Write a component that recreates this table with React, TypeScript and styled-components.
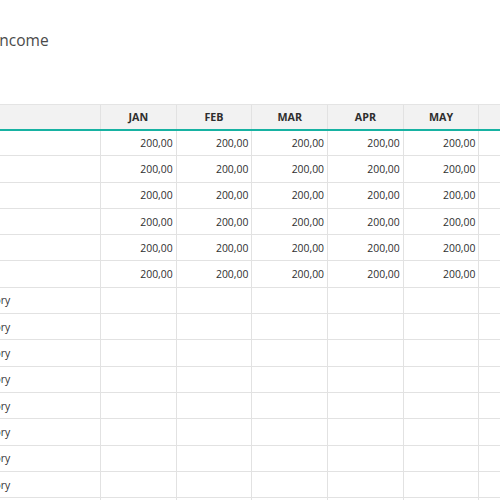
import React from "react";
import styled, { createGlobalStyle } from "styled-components";

const Global = createGlobalStyle`
  html, body { margin: 0; padding: 0; background: #ffffff; }
  body { font-family: "Open Sans", "Noto Sans", sans-serif; overflow: hidden; }
`;

const Viewport = styled.div`
  width: 500px;
  height: 500px;
  overflow: hidden;
  background: #fff;
`;

const Sheet = styled.div`
  margin-left: -40px;
  display: flex;
  flex-direction: column;
`;

const Title = styled.h1`
  margin: 0;
  padding: 30px 0 0 35px;
  height: 104px;
  box-sizing: border-box;
  font-size: 15.5px;
  font-weight: 400;
  color: #4a4a4a;
  line-height: 20px;
`;

const Table = styled.table`
  border-collapse: collapse;
  table-layout: fixed;
  width: 594px;
  flex: none;
`;

const HeadCell = styled.th<{ $first?: boolean }>`
  width: ${(p) => (p.$first ? "140px" : "75.7px")};
  height: 25px;
  padding: 0;
  background: #f2f2f2;
  border-top: 1px solid #e4e4e4;
  border-left: 1px solid #e2e2e2;
  border-bottom: 2px solid #17b2a2;
  font-size: 10.7px;
  font-weight: 700;
  color: #2e2e2e;
  text-align: center;
  box-sizing: border-box;
`;

const Row = styled.tr`
  height: 26.3px;
`;

const Cell = styled.td<{ $label?: boolean }>`
  padding: 0 3px 0 ${(p) => (p.$label ? "6px" : "3px")};
  border-left: 1px solid #e2e2e2;
  border-bottom: 1px solid #e2e2e2;
  font-size: 10.4px;
  color: #2f2f2f;
  text-align: ${(p) => (p.$label ? "left" : "right")};
  white-space: nowrap;
  overflow: hidden;
`;

const months = ["JAN", "FEB", "MAR", "APR", "MAY", "JUN"];

const rows: { label: string; values: string[] }[] = [
  ...Array.from({ length: 6 }, () => ({ label: "", values: ["200,00", "200,00", "200,00", "200,00", "200,00", "200,00"] })),
  ...Array.from({ length: 9 }, () => ({ label: "Category", values: ["", "", "", "", "", ""] })),
];

export default function App() {
  return (
    <Viewport>
      <Global />
      <Sheet>
        <Title>Income</Title>
        <Table>
          <thead>
            <tr>
              <HeadCell $first />
              {months.map((m) => (
                <HeadCell key={m}>{m}</HeadCell>
              ))}
            </tr>
          </thead>
          <tbody>
            {rows.map((r, i) => (
              <Row key={i}>
                <Cell $label>{r.label}</Cell>
                {r.values.map((v, j) => (
                  <Cell key={j}>{v}</Cell>
                ))}
              </Row>
            ))}
          </tbody>
        </Table>
      </Sheet>
    </Viewport>
  );
}
